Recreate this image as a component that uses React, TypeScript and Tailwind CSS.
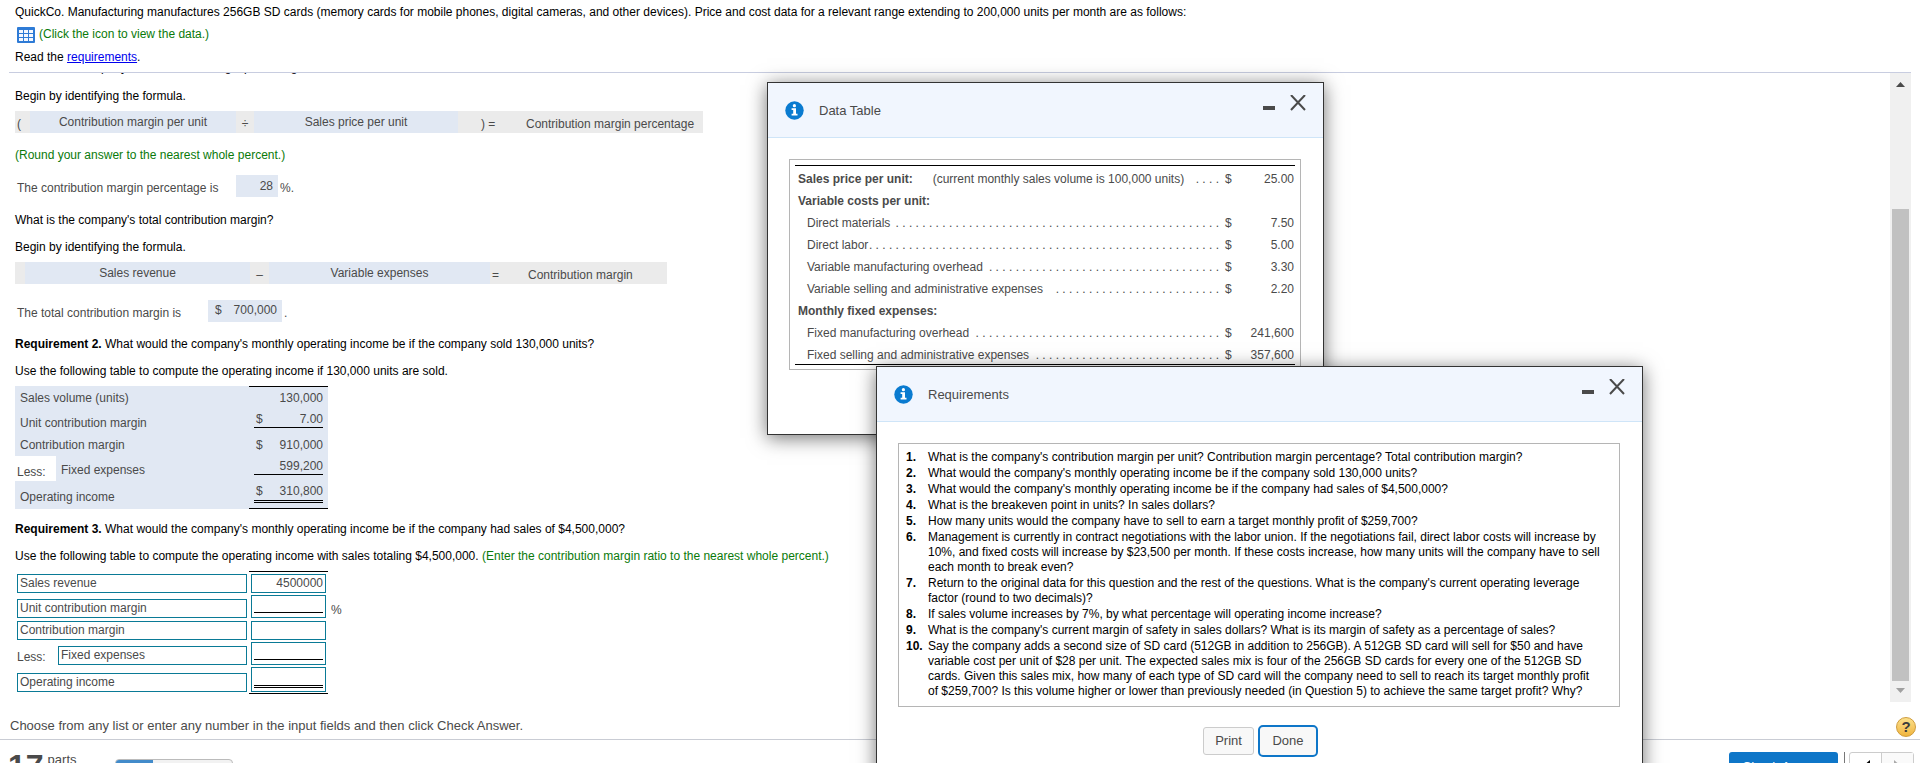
import React from "react";

type DialogProps = { title: string; className: string; children: React.ReactNode };

function InfoIcon() {
  return (
    <svg width="19" height="19" viewBox="0 0 19 19" aria-hidden="true">
      <circle cx="9.5" cy="9.5" r="9.2" fill="#0a7bd0" />
      <circle cx="9.4" cy="4.7" r="1.6" fill="#fff" />
      <path d="M6.6 7.3h4.4v5.4h1.5v1.8H6.6v-1.8h1.6V9.1H6.6z" fill="#fff" />
    </svg>
  );
}

function GridIcon() {
  return (
    <svg width="18" height="16" viewBox="0 0 18 16" aria-hidden="true">
      <rect width="18" height="16" rx="1" fill="#2e7bd6" />
      {[3, 7, 11].map((y) =>
        [2, 7, 12].map((x) => <rect key={`${x}-${y}`} x={x} y={y} width="4" height="3" fill="#f4f8ff" />)
      )}
    </svg>
  );
}

function Dialog({ title, className, children }: DialogProps) {
  return (
    <section
      role="dialog"
      aria-label={title}
      className={`absolute flex flex-col border border-[#333] bg-white shadow-[0_3px_18px_rgba(0,0,0,0.55)] ${className}`}
    >
      <header className="flex h-[55px] shrink-0 items-start border-b border-[#cfe5f8] bg-[#f1f6fe] pr-[17px] pl-[17px]">
        <div className="mt-[18px] flex items-center gap-[15px]">
          <InfoIcon />
          <h2 className="text-[13px] leading-4 text-[#4a4a4a]">{title}</h2>
        </div>
        <div className="mt-3 ml-auto flex gap-[15px]">
          <button aria-label="Minimize" className="h-4">
            <svg width="12" height="16" viewBox="0 0 12 16"><rect y="11" width="12" height="4" fill="#4a4a4a" /></svg>
          </button>
          <button aria-label="Close" className="h-4">
            <svg width="16" height="16" viewBox="0 0 16 16"><path d="M1 0 15 15M15 0 1 15" stroke="#4a4a4a" strokeWidth="2" /></svg>
          </button>
        </div>
      </header>
      {children}
    </section>
  );
}

type DataRow = { label: string; note?: string; dots?: number; amount?: string };

const dataRows: DataRow[] = [
  { label: "Sales price per unit:", note: "(current monthly sales volume is 100,000 units)", dots: 4, amount: "25.00" },
  { label: "Variable costs per unit:" },
  { label: "Direct materials", dots: 49, amount: "7.50" },
  { label: "Direct labor", dots: 53, amount: "5.00" },
  { label: "Variable manufacturing overhead", dots: 35, amount: "3.30" },
  { label: "Variable selling and administrative expenses", dots: 25, amount: "2.20" },
  { label: "Monthly fixed expenses:" },
  { label: "Fixed manufacturing overhead", dots: 37, amount: "241,600" },
  { label: "Fixed selling and administrative expenses", dots: 28, amount: "357,600" },
];

function DataTable() {
  return (
    <div className="border-y border-black">
      <table className="w-full text-[12px] leading-[18px] text-[#4a4a4a]">
        <tbody>
          {dataRows.map((r) => {
            const head = r.label.endsWith(":");
            return (
              <tr key={r.label} className="h-[22px]">
                <td className="p-0 pt-[4px]">
                  <div className="flex pr-[6px]">
                    <span className={head ? "pl-[3px] font-bold" : "pl-3"}>{r.label}</span>
                    {r.note && <span className="ml-5">{r.note}</span>}
                    {r.dots && <span className="ml-auto whitespace-nowrap">{Array(r.dots).fill(".").join(" ")}</span>}
                  </div>
                </td>
                <td className="w-[20px] p-0 pt-[4px]">{r.amount && "$"}</td>
                <td className="w-[50px] p-0 pt-[4px] pr-px text-right">{r.amount}</td>
              </tr>
            );
          })}
        </tbody>
      </table>
    </div>
  );
}

const requirements: string[][] = [
  ["What is the company's contribution margin per unit? Contribution margin percentage? Total contribution margin?"],
  ["What would the company's monthly operating income be if the company sold 130,000 units?"],
  ["What would the company's monthly operating income be if the company had sales of $4,500,000?"],
  ["What is the breakeven point in units? In sales dollars?"],
  ["How many units would the company have to sell to earn a target monthly profit of $259,700?"],
  [
    "Management is currently in contract negotiations with the labor union. If the negotiations fail, direct labor costs will increase by",
    "10%, and fixed costs will increase by $23,500 per month. If these costs increase, how many units will the company have to sell",
    "each month to break even?",
  ],
  [
    "Return to the original data for this question and the rest of the questions. What is the company's current operating leverage",
    "factor (round to two decimals)?",
  ],
  ["If sales volume increases by 7%, by what percentage will operating income increase?"],
  ["What is the company's current margin of safety in sales dollars? What is its margin of safety as a percentage of sales?"],
  [
    "Say the company adds a second size of SD card (512GB in addition to 256GB). A 512GB SD card will sell for $50 and have",
    "variable cost per unit of $28 per unit. The expected sales mix is four of the 256GB SD cards for every one of the 512GB SD",
    "cards. Given this sales mix, how many of each type of SD card will the company need to sell to reach its target monthly profit",
    "of $259,700? Is this volume higher or lower than previously needed (in Question 5) to achieve the same target profit? Why?",
  ],
];

function Requirements() {
  return (
    <ol className="text-[12px] leading-[15px] text-black">
      {requirements.map((lines, i) => (
        <li key={i} className="flex pb-px">
          <span className="w-[22px] shrink-0 font-bold">{i + 1}.</span>
          <span className="whitespace-nowrap">
            {lines.map((l) => (
              <span key={l} className="block">{l}</span>
            ))}
          </span>
        </li>
      ))}
    </ol>
  );
}

type ResultRow = { label: string; less?: boolean; sign?: boolean; value: string; row: string; text: string; rule: string };

const resultRows: ResultRow[] = [
  { label: "Sales volume (units)", value: "130,000", row: "h-[22px]", text: "pt-[4px]", rule: "pt-[3px]" },
  { label: "Unit contribution margin", sign: true, value: "7.00", row: "h-[26px]", text: "pt-[7px]", rule: "pt-[3px] border-b" },
  { label: "Contribution margin", sign: true, value: "910,000", row: "h-[22px]", text: "pt-[3px]", rule: "pt-[3px]" },
  { label: "Fixed expenses", less: true, value: "599,200", row: "h-[25px]", text: "pt-[6px]", rule: "pt-[2px] border-b" },
  {
    label: "Operating income",
    sign: true,
    value: "310,800",
    row: "h-[28px]",
    text: "pt-[8px]",
    rule: "mb-[5px] pt-[2px] pb-px border-b-3 border-double",
  },
];

function ResultTable() {
  return (
    <table className="w-[313px] border-separate border-spacing-0 bg-[#e1e8f3] text-[12px] leading-4 text-[#4a4a4a]">
      <tbody>
        {resultRows.map((r, i) => (
          <tr key={r.label} className={r.row}>
            <th scope="row" className="p-0 text-left align-top font-normal">
              <div className="flex">
                {r.less && <span className="h-[25px] w-[41px] shrink-0 bg-white pt-[8px] pl-[2px]">Less:</span>}
                <span className={`pl-[5px] ${r.text}`}>{r.label}</span>
              </div>
            </th>
            <td className={`w-[79px] border-black p-0 px-[5px] align-top ${i === 0 ? "border-t" : ""} ${i === 4 ? "border-b" : ""}`}>
              <div className={`flex justify-between border-black pl-[2px] ${r.rule}`}>
                <span>{r.sign && "$"}</span>
                <span>{r.value}</span>
              </div>
            </td>
          </tr>
        ))}
      </tbody>
    </table>
  );
}

type EntryRow = { label: string; less?: boolean; value: string; row: string; rule: string };

const entryRows: EntryRow[] = [
  { label: "Sales revenue", value: "4500000", row: "h-[19px]", rule: "h-[17px] pb-[2px]" },
  { label: "Unit contribution margin", value: "", row: "h-[23px]", rule: "h-[17px] border-b" },
  { label: "Contribution margin", value: "", row: "mt-px h-[19px]", rule: "h-[17px]" },
  { label: "Fixed expenses", less: true, value: "", row: "h-[23px]", rule: "h-[17px] border-b" },
  { label: "Operating income", value: "", row: "h-[25px]", rule: "h-[20px] border-b-3 border-double" },
];

function EntryTable() {
  return (
    <div className="flex text-[12px] leading-4 text-[#4a4a4a]">
      <div className="flex w-[234px] flex-col gap-[2px] pt-[3px] pr-[2px] pl-[2px]">
        {entryRows.map((r) => (
          <div key={r.label} className={`flex items-end ${r.row}`}>
            {r.less && <span className="w-[41px]">Less:</span>}
            <input
              aria-label={`${r.label} name`}
              defaultValue={r.label}
              className="h-[19px] min-w-0 flex-1 border border-[#0a7a96] bg-white px-[2px] pb-[2px] outline-none"
            />
          </div>
        ))}
      </div>
      <div className="flex w-[79px] flex-col gap-[2px] border-y border-black px-[2px] pt-[2px] pb-px">
        {entryRows.map((r) => (
          <div key={r.label} className={`shrink-0 border border-[#0a7a96] px-[2px] ${r.row}`}>
            <input
              aria-label={`${r.label} amount`}
              defaultValue={r.value}
              className={`block w-full border-black bg-transparent text-right outline-none ${r.rule}`}
            />
          </div>
        ))}
      </div>
      <span className="pt-[31px] pl-[3px]">%</span>
    </div>
  );
}

const blueCell = "bg-[#e1e8f3] pt-[3px] text-center";

export default function App() {
  return (
    <div
      className="relative flex h-screen flex-col overflow-hidden bg-white text-[12px] leading-4 text-black"
      style={{ fontFamily: '"Liberation Sans", Arial, sans-serif' }}
    >
      <header className="mr-[9px] ml-[9px] h-[73px] shrink-0 border-b border-[#c8cde0] pt-[4px] pl-[6px]">
        <p>
          QuickCo. Manufacturing manufactures 256GB SD cards (memory cards for mobile phones, digital cameras, and other
          devices). Price and cost data for a relevant range extending to 200,000 units per month are as follows:
        </p>
        <button className="mt-[6px] flex items-start gap-1 pl-[2px] text-[#0a7a0a]">
          <span className="pt-px"><GridIcon /></span>
          <span>(Click the icon to view the data.)</span>
        </button>
        <p className="mt-[6px]">
          Read the <a href="#requirements" className="text-[#0000ee] underline">requirements</a>.
        </p>
      </header>

      <div className="mr-[9px] flex h-[629px] shrink-0">
        <main className="min-w-0 flex-1 overflow-hidden pl-[15px]">
          <div className="h-[3px] overflow-hidden">
            <p className="-mt-[14px]">What is the company's contribution margin percentage?</p>
          </div>
          <p className="mt-3">Begin by identifying the formula.</p>
          <div className="mt-[7px] flex h-[22px] w-[688px] bg-[#ebebeb] text-[#4a4a4a]">
            <span className="w-[15px] pt-[5px] pl-[2px]">(</span>
            <span className={`w-[206px] ${blueCell}`}>Contribution margin per unit</span>
            <span className="w-[18px] pt-[5px] text-center">÷</span>
            <span className={`w-[204px] ${blueCell}`}>Sales price per unit</span>
            <span className="w-[68px] pt-[5px] pl-[23px]">) =</span>
            <span className="pt-[5px]">Contribution margin percentage</span>
          </div>
          <p className="mt-[14px] text-[#0a7a0a]">(Round your answer to the nearest whole percent.)</p>
          <div className="mt-3 flex h-[22px] text-[#4a4a4a]">
            <span className="w-[221px] pt-[5px] pl-[2px]">The contribution margin percentage is</span>
            <span className="w-[42px] bg-[#e1e8f3] pt-[3px] pr-[5px] text-right">28</span>
            <span className="pt-[5px] pl-[2px]">%.</span>
          </div>
          <p className="mt-[15px]">What is the company's total contribution margin?</p>
          <p className="mt-[11px]">Begin by identifying the formula.</p>
          <div className="mt-[7px] flex h-[22px] w-[652px] bg-[#ebebeb] text-[#4a4a4a]">
            <span className="w-[10px]" />
            <span className={`w-[225px] ${blueCell}`}>Sales revenue</span>
            <span className="w-[19px] pt-[5px] text-center">–</span>
            <span className={`w-[221px] ${blueCell}`}>Variable expenses</span>
            <span className="w-[38px] pt-[5px] pl-[2px]">=</span>
            <span className="pt-[5px]">Contribution margin</span>
          </div>
          <div className="mt-4 flex h-[22px] text-[#4a4a4a]">
            <span className="w-[193px] pt-[5px] pl-[2px]">The total contribution margin is</span>
            <span className="flex w-[74px] justify-between bg-[#e1e8f3] pt-[2px] pr-[5px] pl-[7px]">
              <span>$</span>
              <span>700,000</span>
            </span>
            <span className="pt-[5px] pl-[2px]">.</span>
          </div>
          <p className="mt-[14px]">
            <b>Requirement 2.</b> What would the company's monthly operating income be if the company sold 130,000 units?
          </p>
          <p className="mt-[11px] mb-[7px]">Use the following table to compute the operating income if 130,000 units are sold.</p>
          <ResultTable />
          <p className="mt-3">
            <b>Requirement 3.</b> What would the company's monthly operating income be if the company had sales of $4,500,000?
          </p>
          <p className="mt-[11px] mb-[7px]">
            Use the following table to compute the operating income with sales totaling $4,500,000.{" "}
            <span className="text-[#0a7a0a]">(Enter the contribution margin ratio to the nearest whole percent.)</span>
          </p>
          <EntryTable />
        </main>
        <div className="flex w-[21px] flex-col items-center bg-[#f0f0f0]" aria-hidden="true">
          <svg className="mt-[9px]" width="9" height="5" viewBox="0 0 9 5"><path d="M0 5 4.5 0 9 5z" fill="#4a4a4a" /></svg>
          <div className="mt-[122px] h-[472px] w-[17px] bg-[#c1c1c1]" />
          <svg className="mt-[7px]" width="9" height="5" viewBox="0 0 9 5"><path d="M0 0 4.5 5 9 0z" fill="#a0a0a0" /></svg>
        </div>
      </div>

      <div className="flex h-[38px] shrink-0 items-start border-b border-[#c9ccd4] pr-[4px] pl-[10px] text-[#4a4a4a]">
        <p className="flex-1 pt-4 text-[13px]">
          Choose from any list or enter any number in the input fields and then click Check Answer.
        </p>
        <button
          aria-label="Help"
          className="mt-[15px] size-5 rounded-full border border-[#cf9c3c] bg-linear-to-b from-[#fbe08a] to-[#f0b53c] text-[15px] leading-[18px] font-bold text-[#3c3c3c]"
        >
          ?
        </button>
      </div>

      <footer className="flex shrink-0 items-start pr-[6px] pl-[8px] text-[#4a4a4a]">
        <span className="pt-[10px] text-[32px] leading-8 font-bold">17</span>
        <span className="pt-3 pl-[4px] text-[13px]">parts</span>
        <div className="mt-[19px] ml-[38px] flex h-4 w-[118px] overflow-hidden rounded-[4px] border border-[#bbb] bg-[#f2f2f2]">
          <div className="w-[37px] bg-[#428bca]" />
        </div>
        <button className="mt-3 ml-auto h-[30px] w-[109px] rounded-[3px] bg-[#0e76c8] text-[13px] text-white">Check Answer</button>
        <div className="mt-3 ml-[6px] h-[30px] w-px bg-[#777]" />
        <div className="mt-3 ml-[4px] flex h-[30px] w-[65px] rounded-[3px] border border-[#ccc]">
          <button aria-label="Previous" className="flex flex-1 items-center justify-center">
            <svg width="8" height="14" viewBox="0 0 8 14"><path d="M8 0v14L0 7z" fill="#000" /></svg>
          </button>
          <button aria-label="Next" className="flex flex-1 items-center justify-center border-l border-[#ccc] bg-[#fafafa]">
            <svg width="8" height="14" viewBox="0 0 8 14"><path d="M0 0v14l8-7z" fill="#aaa" /></svg>
          </button>
        </div>
      </footer>

      <Dialog title="Data Table" className="top-[82px] left-[767px] h-[353px] w-[557px]">
        <div className="mt-[21px] mr-[22px] ml-[21px] h-[211px] border border-[#b5b5b5] px-[5px] pt-[5px]">
          <DataTable />
        </div>
      </Dialog>

      <Dialog title="Requirements" className="top-[366px] left-[876px] h-[420px] w-[767px]">
        <div className="mt-[21px] mr-[22px] ml-[21px] h-[264px] border border-[#b5b5b5] pt-[6px] pl-[7px]">
          <Requirements />
        </div>
        <div className="mt-[18px] flex items-center justify-center gap-[4px] pl-[2px] text-[13px] text-[#4a4a4a]">
          <button className="h-7 w-[51px] rounded-[3px] border border-[#ccc] bg-[#f8f8f8]">Print</button>
          <button className="h-8 w-[60px] rounded-[5px] border-2 border-[#0e76c8] bg-[#f8f8f8]">Done</button>
        </div>
      </Dialog>
    </div>
  );
}
